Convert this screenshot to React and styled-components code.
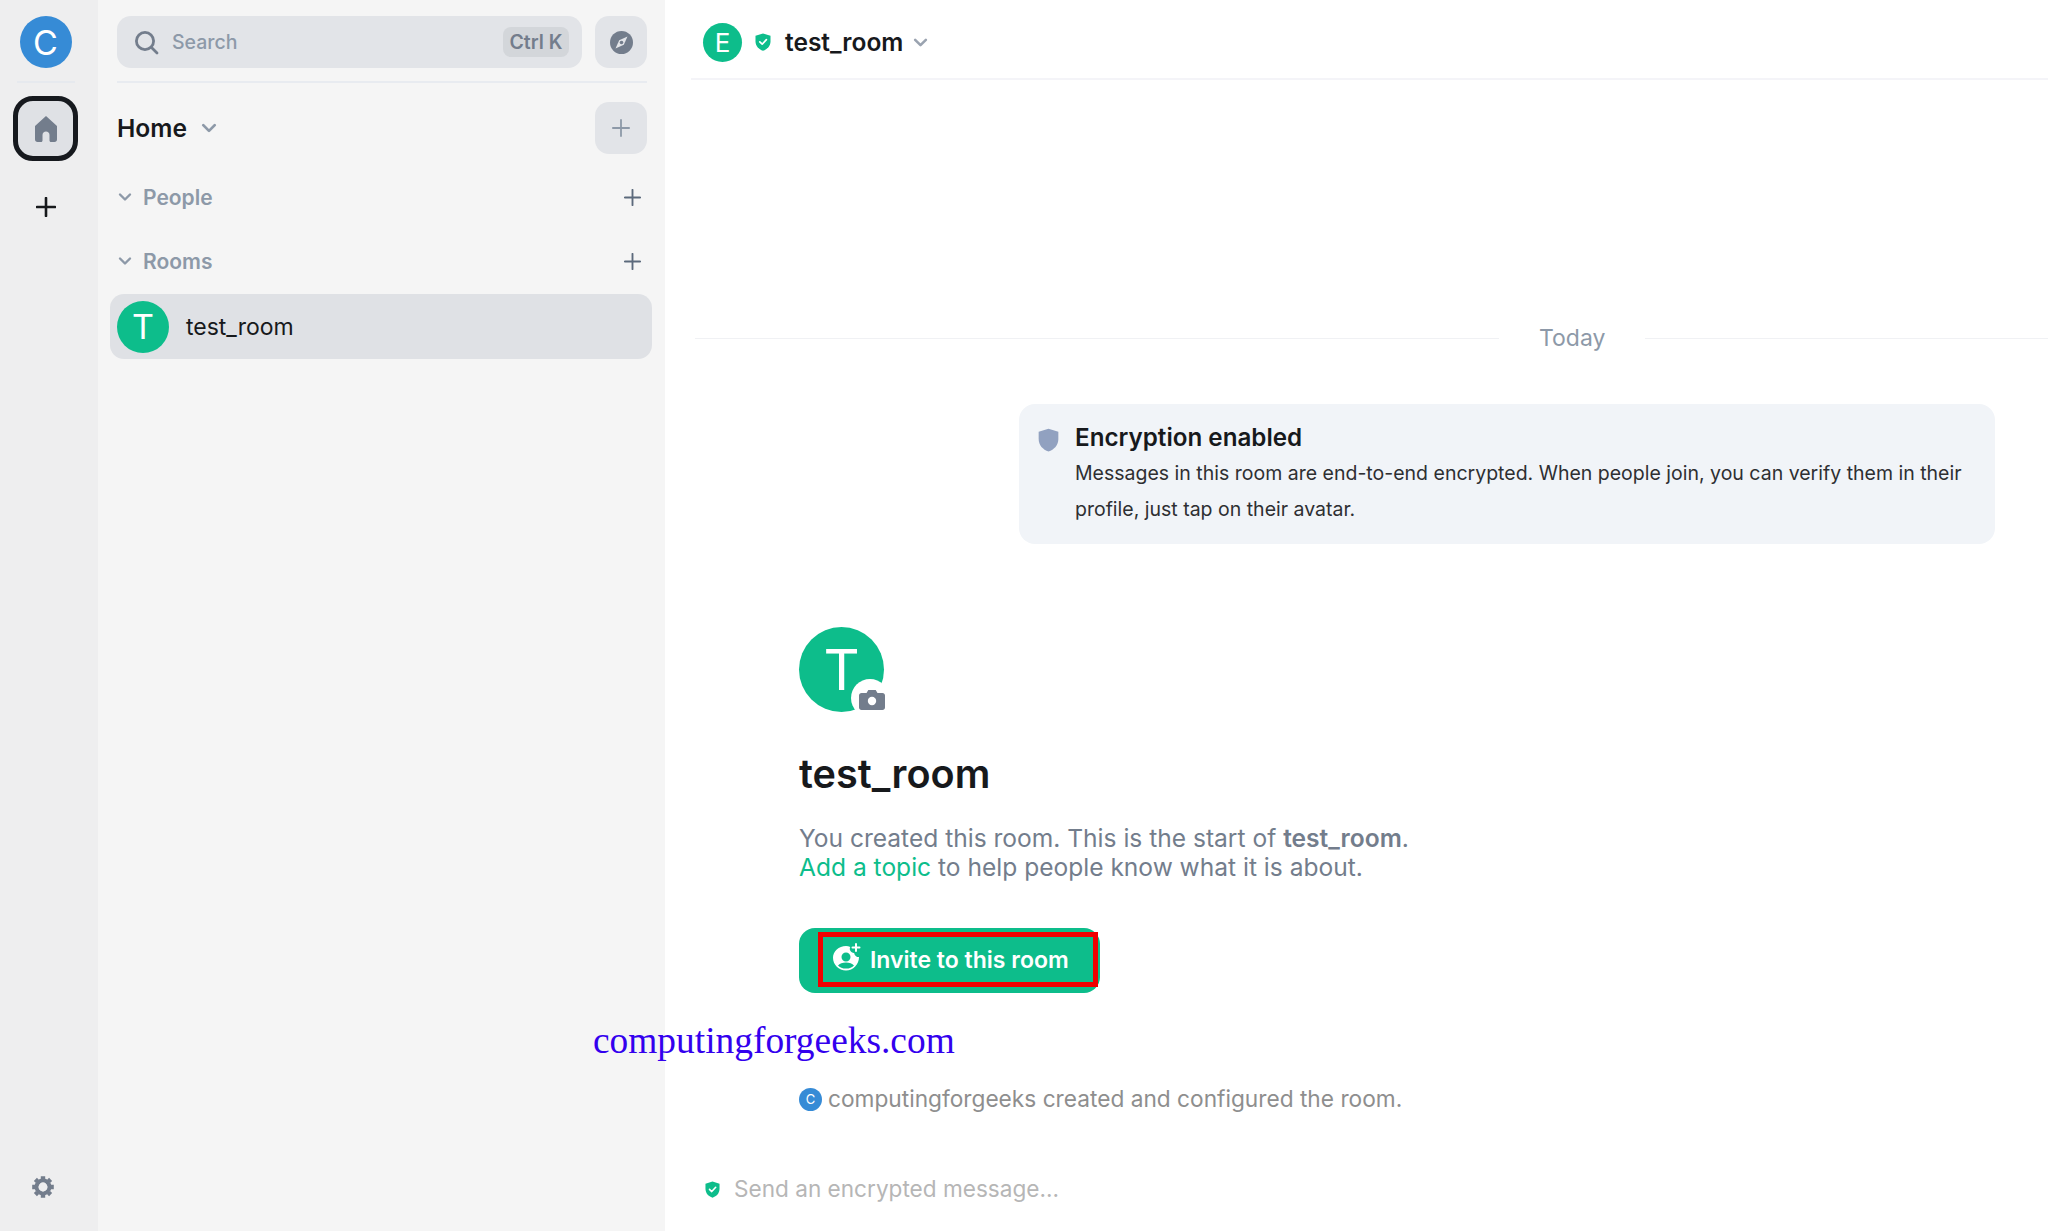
import React from 'react';
import styled, { createGlobalStyle } from 'styled-components';

const Global = createGlobalStyle`
  html, body { margin: 0; padding: 0; background: #fff; }
  body { font-family: Inter, "Noto Sans", sans-serif; }
  #root { width: 2048px; height: 1231px; }
`;

const Page = styled.div`
  position: relative;
  display: flex;
  width: 2048px;
  height: 1231px;
  overflow: hidden;
`;

const Rail = styled.nav`
  width: 98px;
  flex: none;
  background: #eeeeef;
  display: flex;
  flex-direction: column;
  align-items: center;
  padding: 16px 7px 32px 0;
  box-sizing: border-box;
`;

const Avatar = styled.div`
  width: ${p => p.$size}px;
  height: ${p => p.$size}px;
  flex: none;
  border-radius: 50%;
  background: ${p => p.$color};
  color: #fff;
  display: flex;
  align-items: center;
  justify-content: center;
  font-size: ${p => p.$font}px;
  font-weight: 400;
`;

const RailDivider = styled.div`
  width: 58px;
  height: 2px;
  margin: 13px 0;
  background: #e6e9ee;
`;

const HomeTile = styled.div`
  width: 65px;
  height: 65px;
  box-sizing: border-box;
  border: 5px solid #16191e;
  border-radius: 20px;
  background: #dfe1e5;
  display: flex;
  align-items: center;
  justify-content: center;
`;

const RailAdd = styled.div`
  margin-top: 34px;
  height: 24px;
  display: flex;
  align-items: center;
  justify-content: center;
`;

const RailSpacer = styled.div`
  flex: 1;
`;

const GearWrap = styled.div`
  display: flex;
  margin-right: 6px;
`;

const Panel = styled.aside`
  width: 567px;
  flex: none;
  background: #f5f5f5;
  box-sizing: border-box;
  padding: 16px 13px 0 12px;
  display: flex;
  flex-direction: column;
`;

const PanelInner = styled.div`
  padding: 0 5px 0 7px;
  display: flex;
  flex-direction: column;
`;

const SearchRow = styled.div`
  display: flex;
  gap: 13px;
  height: 52px;
`;

const SearchBox = styled.div`
  flex: 1;
  background: #e2e4e8;
  border-radius: 14px;
  display: flex;
  align-items: center;
  padding: 0 13px 0 17px;
  color: #8d99a8;
  font-size: 19.5px;
  font-weight: 500;
`;

const SearchLabel = styled.span`
  flex: 1;
  margin-left: 13px;
`;

const Kbd = styled.span`
  width: 66px;
  height: 30px;
  background: #d3d6da;
  border-radius: 8px;
  color: #737d8c;
  font-size: 19.5px;
  font-weight: 600;
  display: flex;
  align-items: center;
  justify-content: center;
`;

const SquareButton = styled.div`
  width: 52px;
  height: 52px;
  flex: none;
  border-radius: 14px;
  background: #e2e4e8;
  display: flex;
  align-items: center;
  justify-content: center;
`;

const PanelDivider = styled.div`
  height: 2px;
  margin: 13px 0 19px;
  background: #e8ebf0;
`;

const HomeRow = styled.div`
  display: flex;
  align-items: center;
  height: 52px;
`;

const HomeTitle = styled.span`
  font-size: 24.6px;
  font-weight: 600;
  color: #17191c;
  margin-right: 14px;
`;

const Spacer = styled.span`
  flex: 1;
`;

const SectionRow = styled.div`
  display: flex;
  align-items: center;
  height: 30px;
  margin-top: ${p => p.$top}px;
  padding: 0 6px 0 1px;
`;

const SectionLabel = styled.span`
  font-size: 21px;
  font-weight: 600;
  color: #8d99a8;
  margin-left: 11px;
`;

const RoomRow = styled.div`
  height: 65px;
  margin-top: 18px;
  box-sizing: border-box;
  border-radius: 14px;
  background: #dfe1e5;
  display: flex;
  align-items: center;
  padding: 0 7px;
  gap: 17px;
  font-size: 23px;
  color: #17191c;
`;

const Main = styled.main`
  flex: 1;
  min-width: 0;
  display: flex;
  flex-direction: column;
  background: #fff;
`;

const Header = styled.header`
  height: 80px;
  box-sizing: border-box;
  margin-left: 26px;
  padding: 6px 0 0 12px;
  border-bottom: 2px solid #f4f4f8;
  display: flex;
  align-items: center;
`;

const HeaderShield = styled.span`
  display: flex;
  margin: 0 14px 0 13px;
`;

const HeaderTitle = styled.span`
  font-size: 24.5px;
  font-weight: 600;
  color: #17191c;
  margin-right: 10px;
`;

const DateRow = styled.div`
  margin: 243px 0 0 30px;
  height: 30px;
  display: flex;
  align-items: center;
  gap: 40px;
  color: #8d99a8;
  font-size: 23px;
`;

const DateLine = styled.div`
  height: 1px;
  background: #f0f1f4;
  flex: ${p => p.$grow};
`;

const Notice = styled.section`
  width: 976px;
  height: 140px;
  margin: 51px 0 0 354px;
  box-sizing: border-box;
  padding: 19px 20px 0 19px;
  border-radius: 16px;
  background: #f1f4f8;
  display: grid;
  grid-template-columns: 37px 1fr;
  grid-template-rows: 30px auto;
`;

const NoticeIcon = styled.div`
  padding-top: 5px;
`;

const NoticeTitle = styled.div`
  font-size: 24.2px;
  font-weight: 600;
  line-height: 30px;
  color: #17191c;
`;

const NoticeBody = styled.div`
  grid-column: 2;
  margin-top: 2px;
  font-size: 19.5px;
  line-height: 36px;
  color: #2e2f32;
  white-space: nowrap;
`;

const Intro = styled.section`
  margin: 83px 0 0 134px;
  display: flex;
  flex-direction: column;
  align-items: flex-start;
`;

const RoomAvatarWrap = styled.div`
  position: relative;
  width: 85px;
  height: 85px;
`;

const CameraBadge = styled.div`
  position: absolute;
  right: -5px;
  bottom: -5px;
  width: 38px;
  height: 38px;
  border-radius: 50%;
  background: #fff;
  display: flex;
  align-items: center;
  justify-content: center;
`;

const CameraIcon = styled.svg`
  margin: 3px 0 0 3px;
`;

const RoomTitle = styled.h1`
  margin: 37px 0 0;
  font-size: 39.6px;
  line-height: 50px;
  font-weight: 600;
  color: #17191c;
`;

const IntroText = styled.p`
  margin: 25px 0 0;
  font-size: 24.55px;
  line-height: 29px;
  color: #737d8c;
`;

const Strong = styled.b`
  font-weight: 600;
`;

const TopicLink = styled.span`
  color: #0dbd8b;
`;

const InviteButton = styled.div`
  margin-top: 46px;
  width: 301px;
  height: 65px;
  box-sizing: border-box;
  padding: 4px 2px 6px 19px;
  border-radius: 16px;
  background: #0dbd8b;
  display: flex;
`;

const RedBox = styled.div`
  flex: 1;
  box-sizing: border-box;
  border: 5px solid #f00000;
  display: flex;
  align-items: center;
  padding-left: 10px;
  gap: 9px;
  color: #fff;
  font-size: 23px;
  font-weight: 600;
`;

const InviteIcon = styled.svg`
  margin-bottom: 4px;
`;

const EventRow = styled.div`
  margin-top: 94px;
  display: flex;
  align-items: center;
  gap: 6px;
  font-size: 22.7px;
  line-height: 24px;
  color: #8e8e8e;
`;

const Composer = styled.footer`
  margin: auto 0 28px 40px;
  display: flex;
  align-items: center;
  gap: 14px;
  font-size: 22.6px;
  line-height: 28px;
  color: #b6b6b6;
`;

const Watermark = styled.div`
  position: absolute;
  left: 593px;
  top: 1019px;
  font-family: "Liberation Serif", serif;
  font-size: 37.4px;
  line-height: 44px;
  color: #3300ee;
`;

const Chevron = ({ size = 14, color = '#8d99a8', width = 2.4 }) => (
  <svg width={size} height={size} viewBox="0 0 14 14" fill="none">
    <path d="M2 4.5 7 9.5 12 4.5" stroke={color} strokeWidth={width} strokeLinecap="round" strokeLinejoin="round" />
  </svg>
);

const Plus = ({ size, color, width }) => (
  <svg width={size} height={size} viewBox="0 0 20 20" fill="none">
    <path d="M10 1v18M1 10h18" stroke={color} strokeWidth={width} strokeLinecap="round" />
  </svg>
);

const Shield = ({ w, h, fill = '#0dbd8b', check = true }) => (
  <svg width={w} height={h} viewBox="0 0 16 18" fill="none">
    <path d="M8 0.4 15.5 2.8V8.2C15.5 13 12.3 16.2 8 17.8 3.7 16.2 0.5 13 0.5 8.2V2.8Z" fill={fill} />
    {check && <path d="M4.8 8.9 7.2 11.2 11.4 6.6" stroke="#fff" strokeWidth="1.7" strokeLinecap="round" strokeLinejoin="round" />}
  </svg>
);

export default function App() {
  return (
    <Page>
      <Global />
      <Rail>
        <Avatar $size={52} $color="#368bd6" $font={34}>C</Avatar>
        <RailDivider />
        <HomeTile>
          <svg width="24" height="28" viewBox="0 0 24 28" fill="#737d8c">
            <path d="M12 1 23 11V24.5C23 26 22 27 20.5 27H17C16 27 15.5 26.4 15.5 25.5V20C15.5 18 14 16.5 12 16.5S8.5 18 8.5 20V25.5C8.5 26.4 8 27 7 27H3.5C2 27 1 26 1 24.5V11Z" />
          </svg>
        </HomeTile>
        <RailAdd><Plus size={20} color="#17191c" width={2.6} /></RailAdd>
        <RailSpacer />
        <GearWrap>
          <svg width="24" height="24" viewBox="0 0 24 24" fill="none">
            <circle cx="12" cy="12" r="6.4" stroke="#737d8c" strokeWidth="4" />
            <g stroke="#737d8c" strokeWidth="4.4" strokeLinecap="butt">
              <path d="M12 1.2v3M12 19.8v3M1.2 12h3M19.8 12h3M4.4 4.4l2.1 2.1M17.5 17.5l2.1 2.1M4.4 19.6l2.1-2.1M17.5 6.5l2.1-2.1" />
            </g>
            <circle cx="12" cy="12" r="4.4" fill="#eeeeef" />
          </svg>
        </GearWrap>
      </Rail>

      <Panel>
        <PanelInner>
          <SearchRow>
            <SearchBox>
              <svg width="25" height="25" viewBox="0 0 25 25" fill="none">
                <circle cx="11" cy="11" r="8.6" stroke="#737d8c" strokeWidth="2.8" />
                <path d="M17.5 17.5 23 23" stroke="#737d8c" strokeWidth="2.8" strokeLinecap="round" />
              </svg>
              <SearchLabel>Search</SearchLabel>
              <Kbd>Ctrl K</Kbd>
            </SearchBox>
            <SquareButton>
              <svg width="23" height="23" viewBox="0 0 23 23">
                <circle cx="11.5" cy="11.5" r="11.5" fill="#737d8c" />
                <path d="M17.5 5.5 13.8 13.8 5.5 17.5 9.2 9.2Z" fill="#e2e4e8" />
                <circle cx="11.5" cy="11.5" r="1.8" fill="#737d8c" />
              </svg>
            </SquareButton>
          </SearchRow>
          <PanelDivider />
          <HomeRow>
            <HomeTitle>Home</HomeTitle>
            <Chevron size={16} color="#8d99a8" />
            <Spacer />
            <SquareButton>
              <Plus size={18} color="#8d99a8" width={2} />
            </SquareButton>
          </HomeRow>
          <SectionRow $top={28}>
            <Chevron size={14} color="#8d99a8" />
            <SectionLabel>People</SectionLabel>
            <Spacer />
            <Plus size={17} color="#5c6a7c" width={2.2} />
          </SectionRow>
          <SectionRow $top={34}>
            <Chevron size={14} color="#8d99a8" />
            <SectionLabel>Rooms</SectionLabel>
            <Spacer />
            <Plus size={17} color="#5c6a7c" width={2.2} />
          </SectionRow>
        </PanelInner>
        <RoomRow>
          <Avatar $size={52} $color="#0dbd8b" $font={34}>T</Avatar>
          test_room
        </RoomRow>
      </Panel>

      <Main>
        <Header>
          <Avatar $size={39} $color="#0dbd8b" $font={26}>E</Avatar>
          <HeaderShield><Shield w={16} h={18} /></HeaderShield>
          <HeaderTitle>test_room</HeaderTitle>
          <Chevron size={15} color="#9aa3b0" width={2.4} />
        </Header>
        <DateRow>
          <DateLine $grow="0 0 804px" />
          Today
          <DateLine $grow="1" />
        </DateRow>
        <Notice>
          <NoticeIcon><Shield w={21} h={24} fill="#91a1c0" check={false} /></NoticeIcon>
          <NoticeTitle>Encryption enabled</NoticeTitle>
          <NoticeBody>
            Messages in this room are end-to-end encrypted. When people join, you can verify them in their
            <br />
            profile, just tap on their avatar.
          </NoticeBody>
        </Notice>
        <Intro>
          <RoomAvatarWrap>
            <Avatar $size={85} $color="#0dbd8b" $font={56}>T</Avatar>
            <CameraBadge>
              <CameraIcon width="26" height="21" viewBox="0 0 26 21">
                <path d="M2.5 4H7.5L9.3 1H16.7L18.5 4H23.5C24.9 4 26 5.1 26 6.5V18.5C26 19.9 24.9 21 23.5 21H2.5C1.1 21 0 19.9 0 18.5V6.5C0 5.1 1.1 4 2.5 4Z" fill="#737d8c" />
                <circle cx="13" cy="12" r="4.2" fill="#fff" />
              </CameraIcon>
            </CameraBadge>
          </RoomAvatarWrap>
          <RoomTitle>test_room</RoomTitle>
          <IntroText>
            You created this room. This is the start of <Strong>test_room</Strong>.
            <br />
            <TopicLink>Add a topic</TopicLink> to help people know what it is about.
          </IntroText>
          <InviteButton>
            <RedBox>
              <InviteIcon width="28" height="29" viewBox="0 0 28 29" fill="none">
                <path fillRule="evenodd" clipRule="evenodd" d="M13 3C14.5 3 16 3.3 17.3 3.9 16.7 5 16.6 6.4 17.2 7.6 17.9 9.2 19.6 10.2 21.2 10.1 21.3 11.8 22.5 13.4 24.2 13.9 25 14.1 25.6 14.1 26 14 26 21.5 20.2 27.5 13 27.5 5.8 27.5 0 21.7 0 14.8 0 8.2 5.8 3 13 3ZM13 9.5A4.5 4.5 0 1 0 13 18.5 4.5 4.5 0 0 0 13 9.5ZM5 22.5C6.6 24.5 9.6 25.6 13 25.6 16.4 25.6 19.4 24.5 21 22.5 19.4 20.5 16.4 19.4 13 19.4 9.6 19.4 6.6 20.5 5 22.5Z" fill="#fff" />
                <path d="M23 1V8M19.5 4.5H26.5" stroke="#fff" strokeWidth="2" strokeLinecap="round" />
              </InviteIcon>
              Invite to this room
            </RedBox>
          </InviteButton>
          <EventRow>
            <Avatar $size={23} $color="#368bd6" $font={13}>C</Avatar>
            computingforgeeks created and configured the room.
          </EventRow>
        </Intro>
        <Composer>
          <Shield w={15} h={17} />
          Send an encrypted message...
        </Composer>
      </Main>
      <Watermark>computingforgeeks.com</Watermark>
    </Page>
  );
}
